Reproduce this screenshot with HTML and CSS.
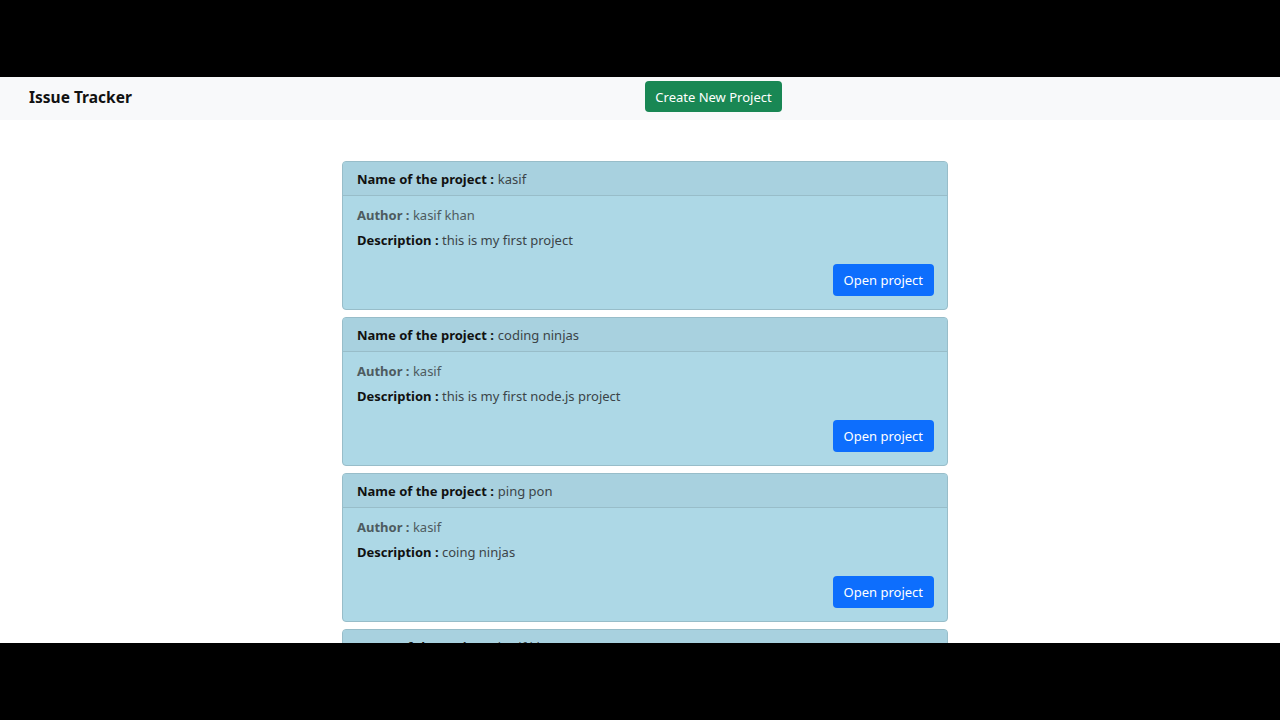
FILE: index.html
```html
<!DOCTYPE html>
<html>
<head>
<meta charset="utf-8">
<link rel="stylesheet" href="styles.css">
</head>
<body>
<div class="bar"></div>
<div class="page">
  <nav class="navbar">
    <span class="brand">Issue Tracker</span>
    <div class="nav-center"><button class="btn btn-success">Create New Project</button></div>
  </nav>
  <main class="list">
    <div class="card">
      <div class="card-header"><b>Name of the project :</b> kasif</div>
      <div class="card-body">
        <div class="line muted"><b>Author :</b> kasif khan</div>
        <div class="line"><b>Description :</b> this is my first project</div>
        <div class="actions"><button class="btn btn-primary">Open project</button></div>
      </div>
    </div>
    <div class="card">
      <div class="card-header"><b>Name of the project :</b> coding ninjas</div>
      <div class="card-body">
        <div class="line muted"><b>Author :</b> kasif</div>
        <div class="line"><b>Description :</b> this is my first node.js project</div>
        <div class="actions"><button class="btn btn-primary">Open project</button></div>
      </div>
    </div>
    <div class="card">
      <div class="card-header"><b>Name of the project :</b> ping pon</div>
      <div class="card-body">
        <div class="line muted"><b>Author :</b> kasif</div>
        <div class="line"><b>Description :</b> coing ninjas</div>
        <div class="actions"><button class="btn btn-primary">Open project</button></div>
      </div>
    </div>
    <div class="card">
      <div class="card-header"><b>Name of the project :</b> kasif khan</div>
      <div class="card-body">
        <div class="line muted"><b>Author :</b> kasif</div>
        <div class="line"><b>Description :</b> project</div>
        <div class="actions"><button class="btn btn-primary">Open project</button></div>
      </div>
    </div>
  </main>
</div>
<div class="bar"></div>
</body>
</html>
```
FILE: styles.css
```css
html, body {
  margin: 0;
  padding: 0;
  background: #000;
  width: 1280px;
  height: 720px;
  overflow: hidden;
}
body {
  font-family: "Noto Sans", "Open Sans", sans-serif;
  font-size: 13px;
  color: #212529;
}
.bar {
  height: 77px;
  background: #000;
}
.page {
  height: 566px;
  background: #fff;
  overflow: hidden;
}
.navbar {
  height: 43px;
  box-sizing: border-box;
  padding-bottom: 4px;
  background: #f8f9fa;
  display: flex;
  align-items: center;
  padding-left: 29px;
}
.brand {
  font-size: 15.5px;
  font-weight: 700;
  color: #111;
  width: 116px;
}
.nav-center {
  flex: 1;
  display: flex;
  justify-content: center;
  padding-left: 2px;
}
.btn {
  font-family: inherit;
  font-size: 13px;
  border: none;
  border-radius: 4px;
  color: #fff;
  padding: 0 11px;
  height: 32px;
  cursor: pointer;
}
.btn-success {
  background: #198754;
  height: 31px;
  padding: 0 10px;
}
.btn-primary {
  background: #0d6efd;
}
.list {
  width: 606px;
  margin: 41px 0 0 342px;
  display: flex;
  flex-direction: column;
  gap: 7px;
}
.card {
  background: #add8e6;
  border: 1px solid #98bdc9;
  border-radius: 4px;
  overflow: hidden;
}
.card-header {
  height: 33px;
  display: flex;
  align-items: center;
  gap: 4px;
  padding: 0 14px;
  background: #a8d1df;
  border-bottom: 1px solid #98bdc9;
  color: #3b4448;
}
.card-header b {
  color: #111;
}
.card-body {
  padding: 9px 13px 13px 14px;
  color: #3b4448;
}
.line {
  height: 25px;
  line-height: 20px;
}
.line b {
  color: #111;
}
.line.muted, .line.muted b {
  color: #4d5b60;
}
.actions {
  display: flex;
  justify-content: flex-end;
  margin-top: 9px;
}
```
